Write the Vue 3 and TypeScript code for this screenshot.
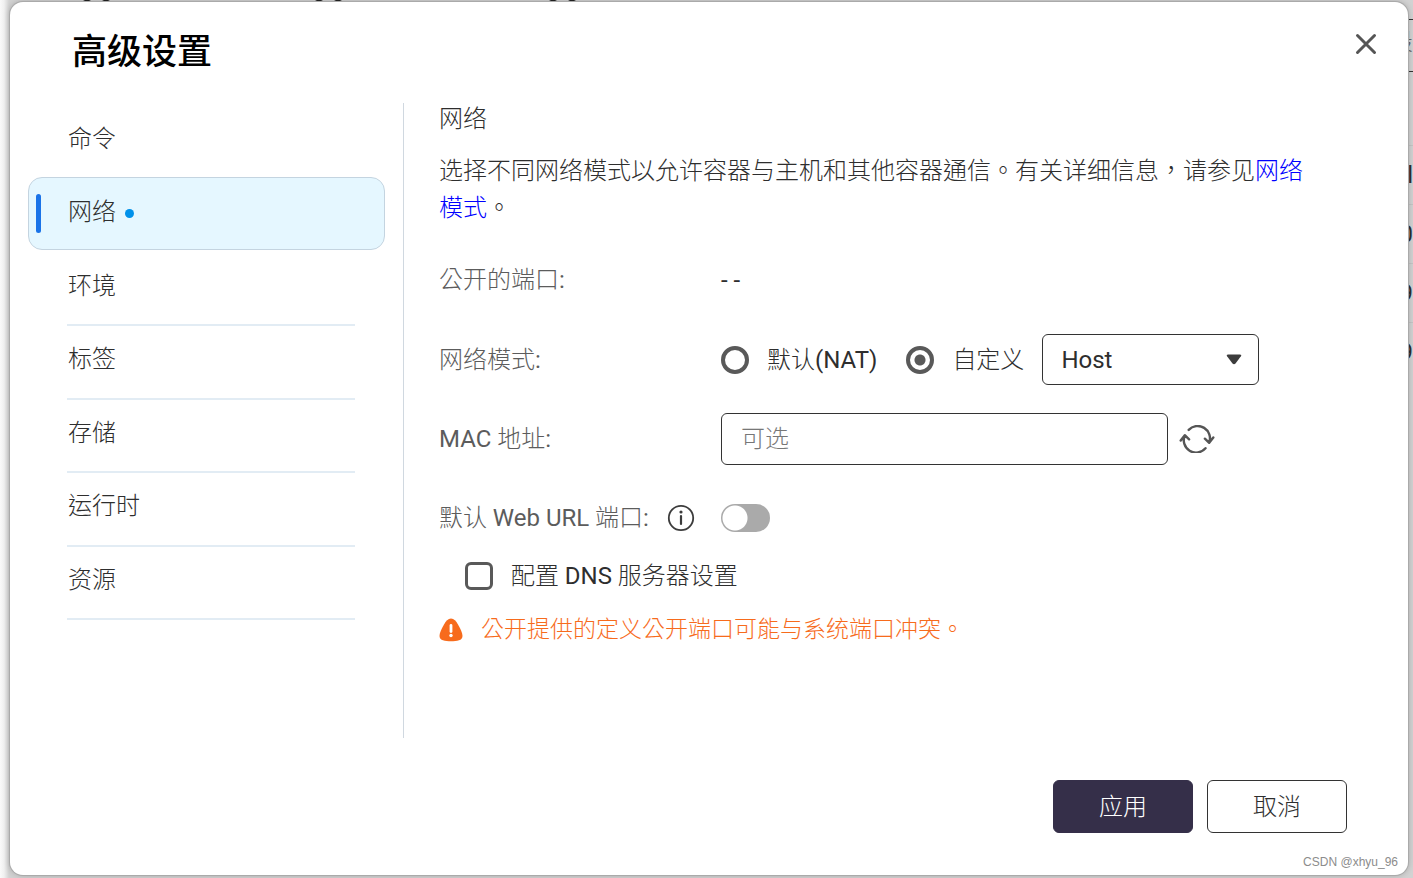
<script setup lang="ts">
import { ref } from 'vue'

interface Section {
  id: string
  label: string
  modified?: boolean
}

const sections: Section[] = [
  { id: 'command', label: '命令' },
  { id: 'network', label: '网络', modified: true },
  { id: 'env', label: '环境' },
  { id: 'labels', label: '标签' },
  { id: 'storage', label: '存储' },
  { id: 'runtime', label: '运行时' },
  { id: 'resource', label: '资源' },
]

const active = ref('network')
const mode = ref('custom')
const network = ref('host')
const mac = ref('')
const webPort = ref(false)
const dns = ref(false)
const rows = ['l', '0', '9', '9']
</script>

<template>
  <div class="screen" lang="zh-TW">
    <div class="behind" aria-hidden="true">
      <svg class="behind-top" width="600" height="2" viewBox="0 0 600 2">
        <g fill="#222">
          <path d="M83 0h8l-2 1h-4zM102 0h8l-2 1h-4zM315 0h8l-2 1h-4zM334 0h8l-2 1h-4zM549 0h8l-2 1h-4zM568 0h8l-2 1h-4z" />
        </g>
      </svg>
      <div class="behind-side">
        <span class="behind-button">最</span>
        <span v-for="(row, i) in rows" :key="i" class="behind-row">{{ row }}</span>
      </div>
    </div>

    <section class="dialog" role="dialog" aria-labelledby="dialog-title">
      <header class="head">
        <h1 id="dialog-title">高级设置</h1>
        <button class="close" type="button" aria-label="关闭">
          <svg width="22" height="22" viewBox="0 0 22 22" fill="none" stroke="#555" stroke-width="3" stroke-linecap="round">
            <path d="M2.500 2.500l17 17M19.500 2.500l-17 17" />
          </svg>
        </button>
      </header>

      <div class="body">
        <nav class="nav">
          <button
            v-for="s in sections"
            :key="s.id"
            type="button"
            class="nav-item"
            :class="{ active: s.id === active }"
            @click="active = s.id"
          >
            <span class="nav-label">{{ s.label }}<i v-if="s.modified" class="dot"></i></span>
          </button>
        </nav>

        <form class="panel" @submit.prevent>
          <h2>网络</h2>
          <p class="intro">选择不同网络模式以允许容器与主机和其他容器通信。有关详细信息，请参见<a href="#network-mode">网络模式</a>。</p>

          <div class="row ports">
            <span class="label"><span>公开的端口<b>:</b></span></span>
            <b>- -</b>
          </div>

          <div class="row mode" role="radiogroup" aria-labelledby="mode-label">
            <span id="mode-label" class="label"><span>网络模式<b>:</b></span></span>
            <label class="radio"><input v-model="mode" type="radio" name="mode" value="nat" /><span>默认<b>(NAT)</b></span></label>
            <label class="radio"><input v-model="mode" type="radio" name="mode" value="custom" />自定义</label>
            <span class="select">
              <select v-model="network" aria-label="自定义">
                <option value="host">Host</option>
              </select>
              <svg width="16" height="11" viewBox="0 0 16 11" aria-hidden="true">
                <path d="M2 .5h12q2 0 .9 1.700L9.500 9.500q-1.500 1.500-3 0L1.100 2.200Q0 .5 2 .5z" fill="#3c3c3c" />
              </svg>
            </span>
          </div>

          <div class="row mac">
            <label class="label" for="mac"><span><b>MAC</b> 地址<b>:</b></span></label>
            <input id="mac" v-model="mac" class="text" type="text" placeholder="可选" />
            <button class="refresh" type="button" aria-label="刷新">
              <svg width="36" height="28" viewBox="0 0 36 28" fill="none" stroke="#555" stroke-width="2.400" stroke-linecap="round" stroke-linejoin="round">
                <path d="M9.700 4.900A12.300 12.300 0 0 1 30.200 17.600M25.900 13.700L30.200 17.800L34.300 12.500" />
                <path d="M26.500 23.200A12.300 12.300 0 0 1 5.800 10.400M1.700 15.500L5.800 10.200L10.100 14.300" />
              </svg>
            </button>
          </div>

          <div class="row web">
            <span class="label">
              <label for="web-port">默认 <b>Web URL</b> 端口<b>:</b></label>
              <svg width="28" height="28" viewBox="0 0 28 28" aria-hidden="true">
                <circle cx="14" cy="14" r="12.200" fill="none" stroke="#3c3c3c" stroke-width="1.800" />
                <circle cx="14" cy="8" r="1.600" fill="#3c3c3c" />
                <path d="M14 12v8" stroke="#3c3c3c" stroke-width="2.200" stroke-linecap="round" />
              </svg>
            </span>
            <input id="web-port" v-model="webPort" class="switch" type="checkbox" role="switch" />
          </div>

          <label class="check"><input v-model="dns" type="checkbox" /><span>配置 <b>DNS</b> 服务器设置</span></label>

          <p class="warning">
            <svg width="24" height="24" viewBox="0 0 24 24" aria-hidden="true">
              <path d="M12 .5C15 .5 17 3 19 6.500C21.500 11 23.500 15 23.500 18C23.500 22.500 18 23.300 12 23.300S.5 22.500 .5 18C.5 15 2.500 11 5 6.500C7 3 9 .5 12 .5z" fill="#f76b1c" />
              <path d="M12 7.500v6" stroke="#fff" stroke-width="2.800" stroke-linecap="round" />
              <circle cx="12" cy="17.500" r="1.700" fill="#fff" />
            </svg>
            公开提供的定义公开端口可能与系统端口冲突。
          </p>
        </form>
      </div>

      <footer class="foot">
        <button class="btn primary" type="button">应用</button>
        <button class="btn" type="button">取消</button>
      </footer>
      <small class="mark">CSDN @xhyu_96</small>
    </section>
  </div>
</template>

<style>
body {
  margin: 0;
}
</style>

<style scoped>
* {
  box-sizing: border-box;
}
.screen {
  position: relative;
  display: flex;
  min-height: 100vh;
  padding: 2px 5px 3px 10px;
  overflow: hidden;
  background: linear-gradient(90deg, #fafafa 0, #f0f0f0 4px, #d2d2d2 9px, #d2d2d2 10px);
  color: #2e2e2e;
  font: 300 24px/36px Roboto, "Noto Sans CJK TC", sans-serif;
}
button,
input,
select {
  margin: 0;
  color: inherit;
  font: inherit;
}
button {
  padding: 0;
  border: 0;
  background: none;
}
b {
  font-weight: 400;
}
.behind {
  position: absolute;
  inset: 0;
}
.behind-top {
  display: block;
}
.behind-side {
  position: absolute;
  top: 0;
  right: 0;
  width: 40px;
  padding-top: 19px;
  font-weight: 400;
  text-align: right;
}
.behind-button {
  display: block;
  height: 53px;
  margin-bottom: 73px;
  border: 1px solid #333;
  border-width: 1px 0;
  color: #666;
  font-weight: 300;
  line-height: 44px;
}
.behind-row {
  display: block;
  height: 59px;
  border-top: 1px solid #c4c4c4;
  line-height: 58px;
}
.dialog {
  position: relative;
  display: flex;
  flex: 1;
  flex-direction: column;
  min-width: 0;
  border-radius: 13px;
  background: #fff;
  box-shadow: 0 0 0 1px #aaa, 0 0 6px rgba(0, 0, 0, 0.25);
}
.head {
  display: flex;
  align-items: flex-start;
  justify-content: space-between;
  height: 101px;
  padding: 27px 31px 0 62px;
}
h1 {
  margin: 0;
  color: #000;
  font-size: 35px;
  font-weight: 500;
  line-height: 48px;
}
.close {
  display: flex;
  margin-top: 4px;
}
.body {
  display: flex;
  flex: 1;
}
.nav {
  flex: 0 0 394px;
  border-right: 1px solid #d0d8e0;
  padding: 0 18px;
}
.nav-item {
  display: block;
  width: 100%;
  padding: 0 30px 0 39px;
  text-align: left;
}
.nav-label {
  display: flex;
  align-items: center;
  height: 74px;
  padding: 0 0 6px 1px;
  border-bottom: 2px solid #e2ecf4;
}
.nav-item:nth-child(odd):not(:first-child) .nav-label {
  height: 73px;
}
.nav-item:first-child .nav-label,
.nav-item.active .nav-label {
  padding-bottom: 0;
  border-color: transparent;
}
.nav-item.active {
  position: relative;
  margin-bottom: 3px;
  border: 1px solid #c4d4e0;
  border-radius: 14px;
  background: #e5f7ff;
  padding-left: 38px;
}
.nav-item.active .nav-label {
  height: 71px;
  padding-bottom: 2px;
}
.active::before {
  position: absolute;
  top: 16px;
  left: 7px;
  width: 5px;
  height: 39px;
  border-radius: 3px;
  background: #1a73e8;
  content: "";
}
.dot {
  width: 9px;
  height: 9px;
  margin: 4px 0 0 9px;
  border-radius: 50%;
  background: #0091ea;
}
.panel {
  flex: 1;
  min-width: 0;
  padding: 0 87px 0 35px;
}
h2 {
  margin: 0 0 18px;
  font: inherit;
  line-height: 32px;
}
p {
  margin: 0;
}
.intro {
  line-height: 37px;
}
a {
  color: #00f;
  text-decoration: none;
}
.row {
  display: flex;
  align-items: center;
}
.label {
  display: flex;
  flex: 0 0 282px;
  align-items: center;
  gap: 18px;
  color: #5c5c5c;
}
.ports {
  margin-top: 35px;
}
.mode {
  margin-top: 36px;
}
.mac {
  margin-top: 28px;
}
.web {
  margin-top: 35px;
}
.radio,
.check {
  display: flex;
  align-items: center;
  gap: 18px;
}
.radio {
  margin-right: 29px;
}
.radio + .radio {
  margin-right: 18px;
}
.radio input {
  width: 28px;
  height: 28px;
  border: 4px solid #595959;
  border-radius: 50%;
  appearance: none;
}
.radio input:checked {
  background: radial-gradient(circle, #595959 5px, transparent 6px);
}
.select {
  position: relative;
  flex: 0 1 217px;
}
select {
  display: block;
  width: 100%;
  height: 51px;
  padding: 0 18px;
  border: 1px solid #333;
  border-radius: 6px;
  background: #fff;
  font-weight: 400;
  appearance: none;
}
.select svg {
  position: absolute;
  top: 20px;
  right: 17px;
  pointer-events: none;
}
.text {
  flex: 0 1 447px;
  min-width: 0;
  height: 52px;
  padding: 0 19px;
  border: 1px solid #333;
  border-radius: 6px;
  background: #fff;
}
.text::placeholder {
  color: #777;
  opacity: 1;
}
.refresh {
  display: flex;
  margin-left: 11px;
}
.switch {
  width: 49px;
  height: 28px;
  border-radius: 14px;
  background: radial-gradient(circle at 14px 14px, #fff 12px, transparent 13px) #aaa;
  appearance: none;
}
.check {
  margin: 22px 0 0 26px;
}
.check input {
  width: 28px;
  height: 28px;
  border: 3px solid #595959;
  border-radius: 6px;
  appearance: none;
}
.warning {
  display: flex;
  align-items: center;
  gap: 18px;
  margin-top: 18px;
  color: #f76b1c;
  font-size: 23px;
}
.foot {
  display: flex;
  justify-content: flex-end;
  gap: 14px;
  padding: 42px 61px 0 0;
}
.btn {
  width: 140px;
  height: 53px;
  border: 1px solid #333;
  border-radius: 6px;
}
.primary {
  border-color: #352f49;
  background: #352f49;
  color: #fff;
}
.mark {
  height: 42px;
  padding: 19px 10px 0 0;
  color: #8c8c8c;
  font: 12px/20px "Liberation Sans", sans-serif;
  text-align: right;
}
</style>
